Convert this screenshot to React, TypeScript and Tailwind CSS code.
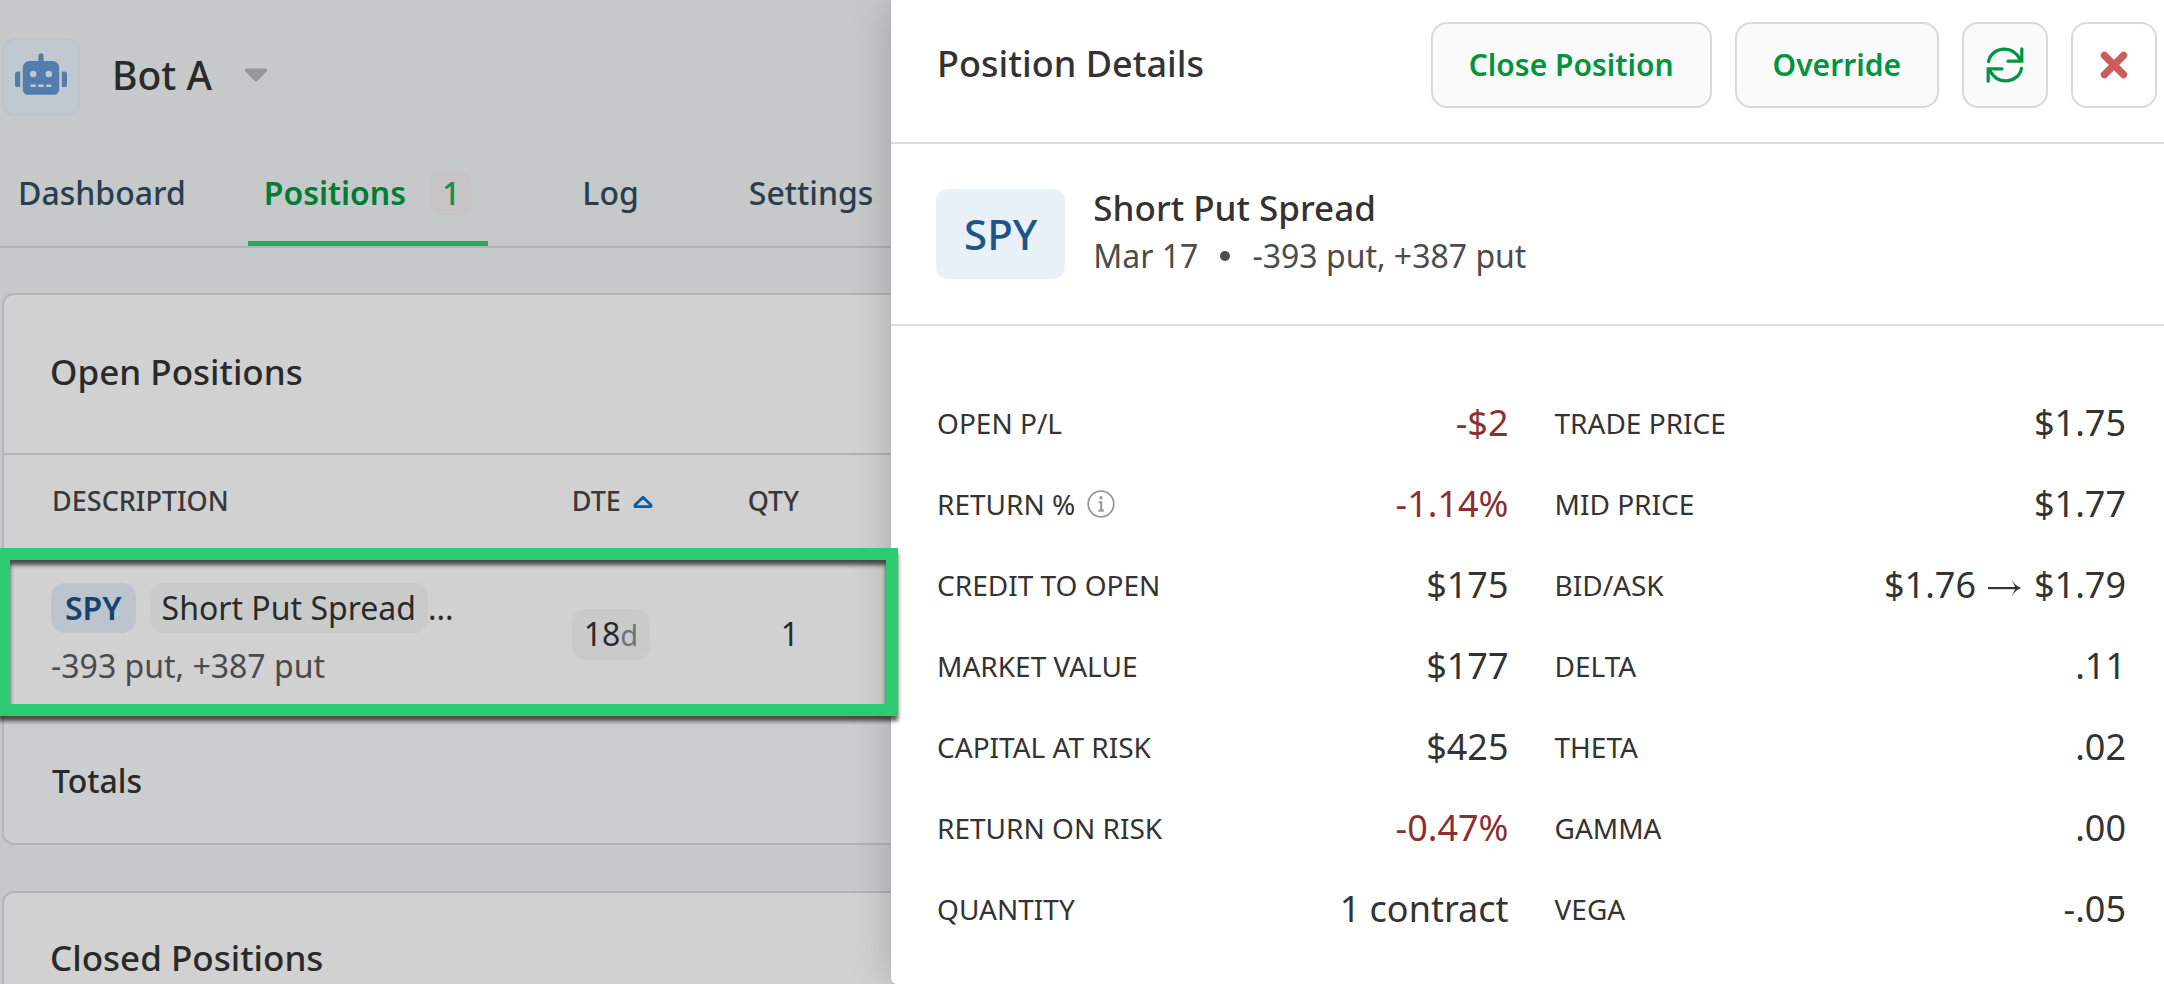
import type { ReactNode } from "react";
import { clsx } from "clsx";
import { FaRobot } from "react-icons/fa";

type Stat = {
  label: string;
  value: ReactNode;
  negative?: boolean;
  info?: boolean;
};

const ArrowIcon = () => (
  <svg
    viewBox="0 0 34 16"
    role="img"
    aria-label="to"
    className="mx-3 mt-1.5 h-4 w-[34px]"
  >
    <path d="M0 7h29v2.2H0z" fill="#333333" />
    <path
      d="M24.5 0.5Q27 6 33.5 8Q27 10.2 24.5 15.7L24.2 15.4Q26.3 11 27.5 8Q26.3 5 24.2 0.8z"
      fill="#333333"
    />
  </svg>
);

const tabs = [
  { name: "Dashboard", className: "ml-0.5 pr-4 pl-3.5" },
  { name: "Positions", className: "ml-[46px] px-4", count: 1 },
  { name: "Log", className: "ml-[94px]" },
  { name: "Settings", className: "ml-[110px]" },
];

const positionStats: Stat[] = [
  { label: "OPEN P/L", value: "-$2", negative: true },
  { label: "RETURN %", value: "-1.14%", negative: true, info: true },
  { label: "CREDIT TO OPEN", value: "$175" },
  { label: "MARKET VALUE", value: "$177" },
  { label: "CAPITAL AT RISK", value: "$425" },
  { label: "RETURN ON RISK", value: "-0.47%", negative: true },
  { label: "QUANTITY", value: "1 contract" },
];

const priceStats: Stat[] = [
  { label: "TRADE PRICE", value: "$1.75" },
  { label: "MID PRICE", value: "$1.77" },
  {
    label: "BID/ASK",
    value: (
      <>
        $1.76
        <ArrowIcon />
        $1.79
      </>
    ),
  },
  { label: "DELTA", value: ".11" },
  { label: "THETA", value: ".02" },
  { label: "GAMMA", value: ".00" },
  { label: "VEGA", value: "-.05" },
];

const InfoIcon = () => (
  <svg
    viewBox="0 0 28 28"
    className="size-7 shrink-0"
    fill="none"
    stroke="#999999"
  >
    <circle cx="14" cy="14" r="12.8" strokeWidth="1.8" />
    <circle cx="14" cy="7.8" r="1.7" fill="#999999" stroke="none" />
    <path d="M11.6 12.2h2.6v8M11.4 20.6h5.4" strokeWidth="2.1" />
  </svg>
);

const RefreshIcon = () => (
  <svg
    viewBox="0 0 38 36"
    className="h-9 w-[38px]"
    fill="none"
    stroke="currentColor"
    strokeWidth="3.2"
    strokeLinecap="round"
  >
    <path d="M2.6 14.6C3.8 7.2 10.6 2.2 18.4 2.2c6.8 0 12.6 4.2 15.8 10.4" />
    <path d="M35.8 1.8v12.4H22" />
    <path d="M35.4 21.4C34.2 28.8 27.4 33.8 19.6 33.8c-6.8 0-12.6-4.2-15.8-10.4" />
    <path d="M2.2 34.2V21.8H16" />
  </svg>
);

const CloseIcon = () => (
  <svg
    viewBox="0 0 28 28"
    className="size-7"
    stroke="#cd5c5c"
    strokeWidth="7.2"
    strokeLinecap="round"
  >
    <path d="M4.4 4.4l19.2 19.2M23.6 4.4L4.4 23.6" />
  </svg>
);

const SortIcon = () => (
  <svg
    viewBox="0 0 20 14"
    className="h-3.5 w-5"
    fill="none"
    stroke="#0062a3"
    strokeWidth="2.8"
    strokeLinejoin="round"
  >
    <path d="M10 2.2L18 10v1.6H2V10z" />
  </svg>
);

const HeaderButton = ({
  children,
  label,
  className,
}: {
  children: ReactNode;
  label?: string;
  className: string;
}) => (
  <button
    aria-label={label}
    className={clsx(
      "flex h-[86px] items-center justify-center rounded-2xl border-2 border-[#d9d9d9] text-3xl leading-10 font-semibold text-[#009440] cursor-pointer",
      className,
    )}
  >
    {children}
  </button>
);

const StatList = ({ stats }: { stats: Stat[] }) => (
  <dl className="flex-1">
    {stats.map((stat) => (
      <div
        key={stat.label}
        className="flex h-[81px] items-center justify-between"
      >
        <dt className="flex items-center gap-3 text-[28px] leading-10">
          {stat.label}
          {stat.info && <InfoIcon />}
        </dt>
        <dd
          className={clsx(
            "flex items-center text-4xl leading-10",
            stat.negative && "text-[#8b2f30]",
          )}
        >
          {stat.value}
        </dd>
      </div>
    ))}
  </dl>
);

const BotPage = () => (
  <main className="flex min-w-0 flex-col pl-0.5">
    <div className="flex items-center pt-[38px]">
      <div className="flex size-[78px] items-center justify-center rounded-xl border-2 border-[#bdc6cc] bg-[#c0c8d0] pb-1.5">
        <FaRobot className="size-[52px] text-[#527eae]" />
      </div>
      <button className="ml-8 flex items-center gap-8 pb-1 text-[39px] leading-12 font-medium cursor-pointer">
        Bot A
        <svg viewBox="0 0 24 14" className="h-3.5 w-6" fill="#979797">
          <path d="M2 0.5h20q2.2 0.5 1 2.5L13.5 12.8q-1.5 1.2-3 0L1 3Q-.2 1 2 .5z" />
        </svg>
      </button>
    </div>

    <nav className="-ml-0.5 mt-6 flex border-b-2 border-[#b0b3b5] pl-0.5 text-[32px] leading-11 font-medium whitespace-nowrap text-[#2b3e50]">
      {tabs.map((tab) => (
        <a
          key={tab.name}
          href="#"
          className={clsx(
            "flex h-[106px] items-center gap-6 border-b-[5px] pt-[5px]",
            tab.className,
            tab.count
              ? "border-[#28aa5f] font-semibold text-[#007c35]"
              : "border-transparent",
          )}
        >
          {tab.name}
          {tab.count && (
            <span className="rounded-xl bg-[#c6c4c4] px-3 font-medium text-[#15914a]">
              {tab.count}
            </span>
          )}
        </a>
      ))}
    </nav>

    <section className="mt-[45px] overflow-hidden rounded-l-xl border-2 border-r-0 border-[#b2b4b7] bg-[#d1d1d1]">
      <h2 className="px-[46px] pt-[52px] pb-14 text-[35px] leading-[50px] font-medium">
        Open Positions
      </h2>
      <table className="w-full table-fixed border-t-2 border-[#b2b2b9] text-left">
        <thead className="text-[27px] text-[#38393d]">
          <tr className="h-[94px]">
            <th className="w-[64%] pl-12 font-medium">DESCRIPTION</th>
            <th className="w-[100px] font-medium">
              <span className="flex items-center gap-3">
                DTE
                <SortIcon />
              </span>
            </th>
            <th className="pr-[92px] text-right font-medium">QTY</th>
          </tr>
        </thead>
        <tbody>
          <tr className="h-[170px] text-[32px] leading-[50px]">
            <td className="pt-2 pl-[47px]">
              <div className="flex">
                <span className="rounded-[14px] bg-[#bcc5cd] px-3.5 font-semibold text-[#17426e]">
                  SPY
                </span>
                <span className="ml-3.5 rounded-[14px] bg-[#c9cbca] px-3">
                  Short Put Spread
                </span>
                ...
              </div>
              <p className="mt-2 text-[#4a4b4e]">-393 put, +387 put</p>
            </td>
            <td className="pt-0.5">
              <span className="inline-block rounded-[14px] bg-[#c9cbca] px-3">
                18<span className="text-[29px] text-[#717272]">d</span>
              </span>
            </td>
            <td className="pt-0.5 pr-[92px] text-right">1</td>
          </tr>
        </tbody>
        <tfoot className="bg-[#cccdcf]">
          <tr className="h-[125px]">
            <th colSpan={3} className="pl-12 text-[32px] font-medium">
              Totals
            </th>
          </tr>
        </tfoot>
      </table>
    </section>

    <section className="mt-[46px] flex-1 rounded-tl-xl border-2 border-r-0 border-b-0 border-[#b2b4b7] bg-[#d1d1d1]">
      <h2 className="px-[46px] pt-10 text-[35px] leading-[50px] font-medium">
        Closed Positions
      </h2>
    </section>
  </main>
);

const PositionDrawer = () => (
  <aside className="z-10 rounded-bl-md bg-white text-[#333333] shadow-[0_0_40px_rgba(0,0,0,0.2)]">
    <header className="flex h-36 items-center justify-between border-b-2 border-[#dcdce2] pr-[7px] pb-3 pl-[46px]">
      <h1 className="pb-0.5 text-4xl leading-12 font-medium">
        Position Details
      </h1>
      <div className="flex gap-[23px]">
        <HeaderButton className="bg-[#fafafa] px-9">Close Position</HeaderButton>
        <HeaderButton className="bg-[#fafafa] px-9">Override</HeaderButton>
        <HeaderButton label="Refresh" className="w-[86px] bg-[#fafafa]">
          <RefreshIcon />
        </HeaderButton>
        <HeaderButton label="Close" className="w-[86px] bg-white">
          <CloseIcon />
        </HeaderButton>
      </div>
    </header>

    <div className="flex h-[182px] items-center gap-7 border-b-2 border-[#dcdce2] pl-[45px]">
      <span className="rounded-xl bg-[#e8f0f8] px-7 text-[42px] leading-[90px] font-medium text-[#1f5488]">
        SPY
      </span>
      <div className="pb-1">
        <p className="text-[35px] leading-12 font-medium">Short Put Spread</p>
        <p className="flex items-center text-[32px] leading-12 text-[#4c4c4c]">
          Mar 17
          <span className="mx-[22px] size-2.5 rounded-full bg-[#4c4c4c]" />
          -393 put, +387 put
        </p>
      </div>
    </div>

    <div className="flex gap-[46px] pt-14 pr-[38px] pl-[46px]">
      <StatList stats={positionStats} />
      <StatList stats={priceStats} />
    </div>
  </aside>
);

const App = () => (
  <div className="relative grid min-h-screen grid-cols-[7fr_10fr] overflow-hidden bg-[#c5c9c9] font-['Noto_Sans','DejaVu_Sans',sans-serif] text-[#2a2a2a]">
    <BotPage />
    <PositionDrawer />
    {/* highlight around the selected row, runs over the drawer edge */}
    <div className="pointer-events-none absolute top-[548px] -left-0.5 z-20 grid h-[168px] w-full grid-cols-[7fr_10fr]">
      <div className="-mr-[9px] border-[12px] border-[#2ecc71] drop-shadow-[0_5px_2px_rgba(0,0,0,0.65)]" />
    </div>
  </div>
);

export default App;
